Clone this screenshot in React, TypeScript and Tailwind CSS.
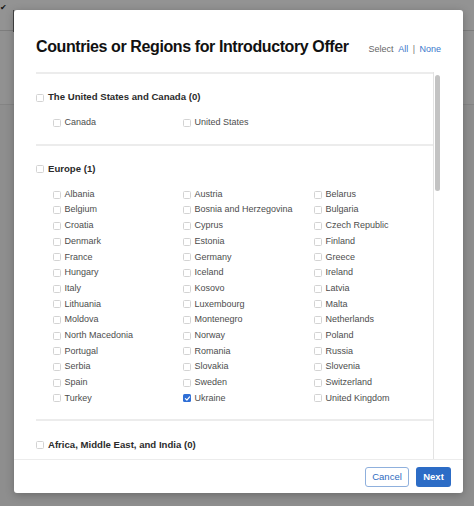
const FONT = { fontFamily: '"Liberation Sans", Arial, sans-serif' };

const sections: { title: string; items: string[] }[] = [
  { title: "The United States and Canada (0)", items: ["Canada", "United States"] },
  {
    title: "Europe (1)",
    items: [
      "Albania", "Austria", "Belarus",
      "Belgium", "Bosnia and Herzegovina", "Bulgaria",
      "Croatia", "Cyprus", "Czech Republic",
      "Denmark", "Estonia", "Finland",
      "France", "Germany", "Greece",
      "Hungary", "Iceland", "Ireland",
      "Italy", "Kosovo", "Latvia",
      "Lithuania", "Luxembourg", "Malta",
      "Moldova", "Montenegro", "Netherlands",
      "North Macedonia", "Norway", "Poland",
      "Portugal", "Romania", "Russia",
      "Serbia", "Slovakia", "Slovenia",
      "Spain", "Sweden", "Switzerland",
      "Turkey", "Ukraine", "United Kingdom",
    ],
  },
  { title: "Africa, Middle East, and India (0)", items: [] },
];

const checked = new Set(["Ukraine"]);

function Box({ on }: { on?: boolean }) {
  if (on) {
    return (
      <span className="flex h-[8px] w-[8px] shrink-0 items-center justify-center rounded-[1.5px] bg-[#2f6fd6]">
        <svg viewBox="0 0 8 8" className="h-[7px] w-[7px]">
          <path d="M1.6 4.2 L3.3 5.8 L6.4 2.2" fill="none" stroke="white" strokeWidth="1.4" strokeLinecap="round" strokeLinejoin="round" />
        </svg>
      </span>
    );
  }
  return <span className="h-[8px] w-[8px] shrink-0 rounded-[1.5px] border border-[#d3d3d3] bg-white" />;
}

export default function App() {
  return (
    <div className="relative h-[506px] w-[474px] overflow-hidden bg-[#8e8e8e]" style={FONT}>
      {/* page behind the overlay */}
      <div className="h-[31px] border-b border-[#7d7d7d] bg-[#939393]" />
      <div className="h-[74px] border-b border-[#848484] bg-[#919191]" />
      <span className="absolute left-0 top-[4px] text-[8px] leading-none text-[#111]">✔</span>
      <div className="absolute left-[13px] top-[10px] h-[22px] w-px bg-[#444]" />

      {/* ── Modal ── */}
      <div className="absolute left-[14px] top-[10px] flex h-[483px] w-[449px] flex-col rounded-[3px] bg-white shadow-[0_2px_8px_rgba(0,0,0,0.25)]">
        <div className="flex h-[62px] shrink-0 items-start justify-between px-[22px] pt-[27px]">
          <h1 className="text-[16px] font-bold leading-[20px] tracking-[-0.4px] text-[#111]">
            Countries or Regions for Introductory Offer
          </h1>
          <div className="mt-[6px] flex gap-[4.5px] text-[9px] leading-[12px]">
            <span className="text-[#666]">Select</span>
            <span className="text-[#3b78cc]">All</span>
            <span className="text-[#777]">|</span>
            <span className="text-[#3b78cc]">None</span>
          </div>
        </div>

        <div className="mx-[22px] flex min-h-0 flex-1">
          <div className="flex-1 overflow-hidden border-t-2 border-[#ececec]">
            {sections.map((s, i) => (
              <div key={s.title} className={`pb-[13px] pt-[16px] ${i > 0 ? "border-t-2 border-[#ececec]" : ""}`}>
                <div className="flex h-[15px] items-center gap-[4px]">
                  <Box />
                  <span className="text-[9.6px] font-bold text-[#2b2b2b]">{s.title}</span>
                </div>
                {s.items.length > 0 && (
                  <div className="mt-[10px] grid grid-cols-[130px_131px_1fr] pl-[17px]">
                    {s.items.map((name) => (
                      <div key={name} className="flex h-[15.7px] items-center gap-[3.5px]">
                        <Box on={checked.has(name)} />
                        <span className="whitespace-nowrap text-[9px] text-[#4d4d4d]">{name}</span>
                      </div>
                    ))}
                  </div>
                )}
              </div>
            ))}
          </div>
          {/* fake scrollbar */}
          <div className="w-[8px] border-l border-[#e3e3e3] pl-[1px] pt-[3px]">
            <div className="h-[116px] w-[5px] rounded-full bg-[#c3c3c3]" />
          </div>
        </div>

        <div className="flex h-[34px] shrink-0 items-start justify-end gap-[7px] border-t border-[#ececec] pr-[12px] pt-[7px]">
          <button className="h-[20px] w-[44px] rounded-[3px] border border-[#8fb0dd] bg-white text-[9.5px] text-[#2e6bc0]">
            Cancel
          </button>
          <button className="h-[20px] w-[35px] rounded-[3px] bg-[#2c6cc6] text-[9.5px] font-bold text-white">
            Next
          </button>
        </div>
      </div>
    </div>
  );
}
